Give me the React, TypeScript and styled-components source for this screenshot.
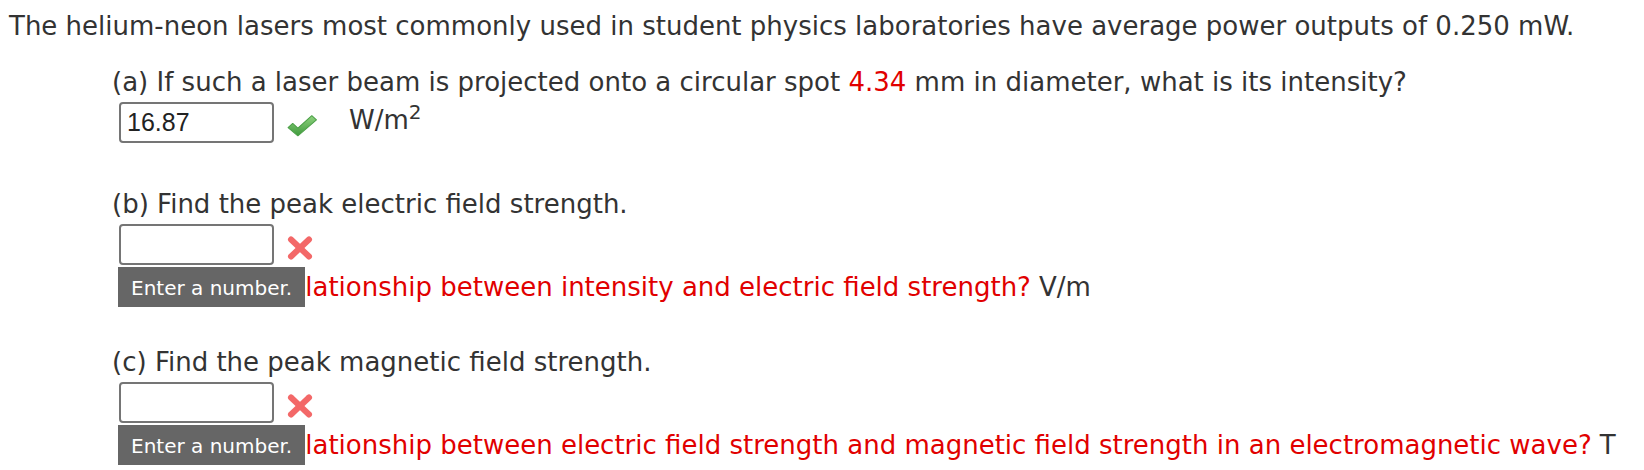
import React from "react";
import styled, { createGlobalStyle } from "styled-components";

type Status = "correct" | "wrong";

type PartProps = {
  label: string;
  question: React.ReactNode;
  value?: string;
  status: Status;
  unit?: React.ReactNode;
  hint?: string;
  hintUnit?: string;
};

const GlobalStyle = createGlobalStyle`
  body {
    margin: 0;
    background: #ffffff;
    font-family: "DejaVu Sans", Verdana, sans-serif;
    color: #333333;
  }
`;

const CheckIcon: React.FC = () => (
  <svg width="32" height="25" viewBox="0 0 31 23">
    <defs>
      <linearGradient id="chk" x1="0" y1="0" x2="0" y2="1">
        <stop offset="0" stopColor="#8fd27f" />
        <stop offset="1" stopColor="#3f9a3c" />
      </linearGradient>
    </defs>
    <path
      d="M2 13.5 L6.5 9.5 L11.5 14 L25 2 L29.5 6 L11.5 21.5 Z"
      fill="url(#chk)"
      stroke="#4a9f46"
      strokeWidth="1"
      strokeLinejoin="round"
    />
  </svg>
);

const CrossIcon: React.FC = () => (
  <svg width="28" height="26" viewBox="0 0 28 26">
    <g stroke="#f36868" strokeWidth="6" strokeLinecap="round">
      <line x1="5" y1="4.5" x2="23" y2="21.5" />
      <line x1="23" y1="4.5" x2="5" y2="21.5" />
    </g>
  </svg>
);

const Part: React.FC<PartProps> = ({
  label,
  question,
  value,
  status,
  unit,
  hint,
  hintUnit,
}) => (
  <PartBlock $hasHint={!!hint}>
    <Question>
      ({label}) {question}
    </Question>
    <AnswerRow>
      <AnswerBox value={value ?? ""} readOnly />
      <StatusMark>
        {status === "correct" ? <CheckIcon /> : <CrossIcon />}
      </StatusMark>
      {unit && <Unit>{unit}</Unit>}
    </AnswerRow>
    {hint && (
      <HintRow>
        <Tooltip>Enter a number.</Tooltip>
        <HintText>{hint}</HintText>
        {hintUnit && <HintUnit>{hintUnit}</HintUnit>}
      </HintRow>
    )}
  </PartBlock>
);

const App: React.FC = () => {
  return (
    <Page>
      <GlobalStyle />
      <Intro>
        The helium-neon lasers most commonly used in student physics
        laboratories have average power outputs of 0.250 mW.
      </Intro>

      <Part
        label="a"
        question={
          <>
            If such a laser beam is projected onto a circular spot{" "}
            <Red>4.34</Red> mm in diameter, what is its intensity?
          </>
        }
        value="16.87"
        status="correct"
        unit={
          <>
            W/m<sup>2</sup>
          </>
        }
      />

      <Part
        label="b"
        question="Find the peak electric field strength."
        status="wrong"
        hint="lationship between intensity and electric field strength?"
        hintUnit="V/m"
      />

      <Part
        label="c"
        question="Find the peak magnetic field strength."
        status="wrong"
        hint="lationship between electric field strength and magnetic field strength in an electromagnetic wave?"
        hintUnit="T"
      />
    </Page>
  );
};

const Page = styled.div`
  padding: 9px 9px 0 9px;
  font-size: 26px;
  line-height: 34px;
`;

const Intro = styled.div`
  margin: 0;
  white-space: nowrap;
`;

const Red = styled.span`
  color: #e10000;
`;

const PartBlock = styled.div<{ $hasHint: boolean }>`
  display: flex;
  flex-direction: column;
  padding-left: 103px;
  margin-top: 22px;
  padding-bottom: ${(p) => (p.$hasHint ? "0" : "6px")};

  & + & {
    margin-top: 38px;
  }
`;

const Question = styled.div`
  white-space: nowrap;
`;

const AnswerRow = styled.div`
  display: flex;
  align-items: center;
  margin-top: 3px;
  padding-left: 7px;
  height: 41px;
`;

const AnswerBox = styled.input`
  box-sizing: border-box;
  width: 155px;
  height: 41px;
  border: 2px solid #757575;
  border-radius: 4px;
  padding: 0 6px;
  font-family: "Liberation Sans", Arial, sans-serif;
  font-size: 25px;
  color: #222222;
  background: #ffffff;
  outline: none;
`;

const StatusMark = styled.span`
  display: flex;
  margin-left: 12px;
  margin-top: 6px;
`;

const Unit = styled.span`
  margin-left: 31px;
  font-size: 26px;
  margin-top: -6px;

  sup {
    font-size: 20px;
    line-height: 0;
    vertical-align: 10px;
  }
`;

const HintRow = styled.div`
  display: flex;
  align-items: stretch;
  margin-top: 2px;
  padding-left: 6px;
  white-space: nowrap;
`;

const Tooltip = styled.span`
  display: flex;
  align-items: center;
  height: 40px;
  padding: 2px 13px 0 13px;
  box-sizing: border-box;
  background: #666666;
  color: #ffffff;
  font-size: 20px;
`;

const HintText = styled.span`
  color: #e10000;
  line-height: 40px;
`;

const HintUnit = styled.span`
  margin-left: 8px;
  line-height: 40px;
`;

export default App;
